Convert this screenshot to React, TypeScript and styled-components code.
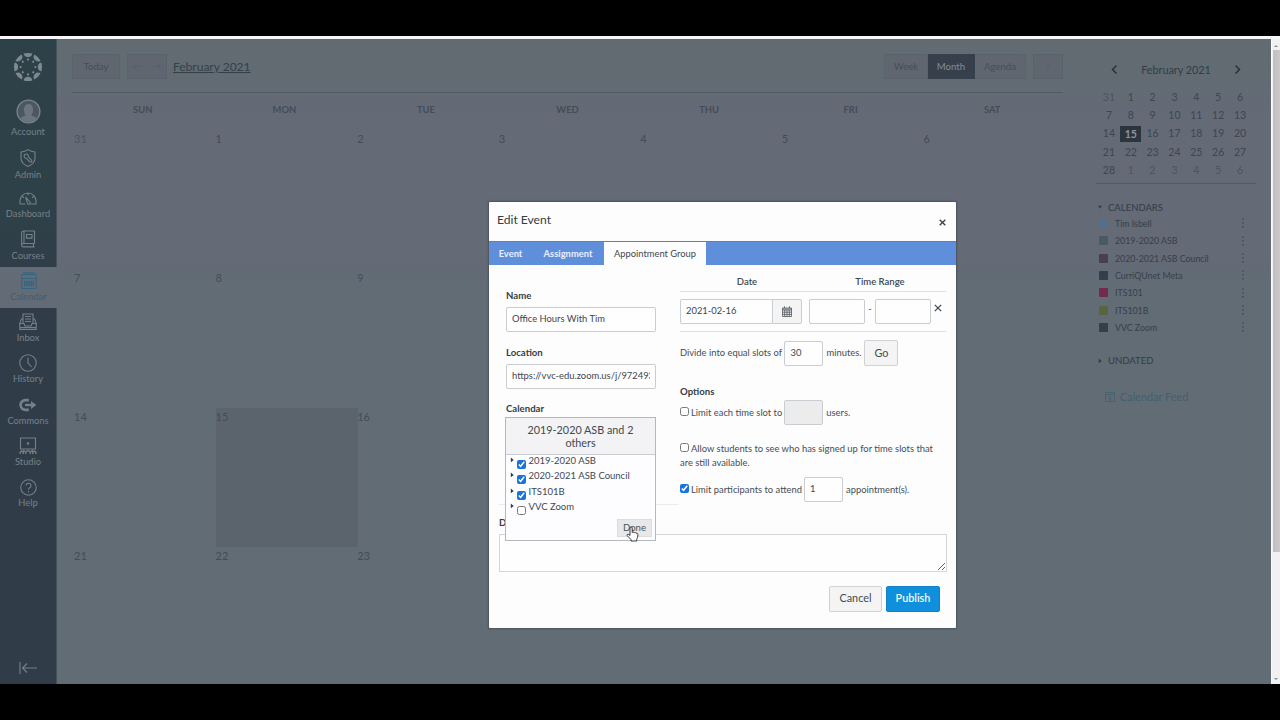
import React from "react";
import styled, { createGlobalStyle } from "styled-components";

const GlobalStyle = createGlobalStyle`
  * { box-sizing: border-box; }
  body {
    margin: 0;
    background: #000;
    font-family: Lato, "Liberation Sans", sans-serif;
    font-size: 9.4px;
    color: #3a444d;
  }
  button, input, textarea { font-family: inherit; margin: 0; }
`;

const Screen = styled.div`
  position: relative;
  width: 1280px;
  height: 720px;
  padding: 36px 0;
  background: #000;
  overflow: hidden;
`;

const Browser = styled.div`
  display: flex;
  height: 648px;
  border-top: 3px solid #f6f6f8;
`;

/* ---------- global navigation ---------- */

const Nav = styled.nav`
  display: flex;
  flex-direction: column;
  width: 57px;
  background: linear-gradient(#2e4048 0, #2e4048 180px, #303d48 240px, #303d49 100%);
  color: #76808a;
  border-right: 1px solid #45525b;
`;

const Logo = styled.div`
  display: flex;
  justify-content: center;
  padding-top: 13px;
  height: 54px;
`;

const NavItem = styled.a<{ $active?: boolean; $tall?: boolean }>`
  display: flex;
  flex-direction: column;
  align-items: center;
  height: ${(p) => (p.$tall ? 50 : 41.3)}px;
  flex: none;
  background: ${(p) => (p.$active ? "#626b76" : "transparent")};
  color: ${(p) => (p.$active ? "#455d6d" : "inherit")};
  margin-right: ${(p) => (p.$active ? -1 : 0)}px;
`;

const NavIcon = styled.span<{ $h: number }>`
  display: flex;
  align-items: center;
  justify-content: center;
  height: ${(p) => p.$h}px;
  margin-top: 2.5px;
  svg { display: block; overflow: visible; }
`;

const NavLabel = styled.span`
  font-size: 9.3px;
  line-height: 10px;
`;

const Collapse = styled.div`
  display: flex;
  justify-content: center;
  margin-top: auto;
  padding-bottom: 7px;
`;

/* ---------- calendar page ---------- */

const Page = styled.div`
  display: flex;
  flex: 1;
  padding-left: 15px;
  background: linear-gradient(#616c71 0, #626b73 40px, #646a76 75px, #646a76 222px, #616c75 240px, #616c75 100%);
`;

const Main = styled.main`
  width: 991px;
`;

const Toolbar = styled.div`
  display: flex;
  align-items: center;
  height: 54px;
  padding-top: 2px;
  border-bottom: 1px solid #525a65;
`;

const ToolButton = styled.button<{ $w: number; $active?: boolean }>`
  display: flex;
  align-items: center;
  justify-content: center;
  width: ${(p) => p.$w}px;
  height: 25px;
  padding: 0 0 1px;
  border: 1px solid ${(p) => (p.$active ? "#35404b" : "#5a626d")};
  background: ${(p) => (p.$active ? "#36404c" : "#60666f")};
  color: ${(p) => (p.$active ? "#858c95" : "#454e58")};
  font-size: 9.6px;
  & + & { border-left-width: 0; }
`;

const ArrowPair = styled(ToolButton)`
  justify-content: space-around;
  margin-left: 7px;
  color: #565e69;
  && { border-left-width: 1px; }
`;

const MonthTitle = styled.h1`
  flex: 1;
  margin: -1px 0 0 6px;
  font-size: 12px;
  font-weight: 400;
  color: #353f4a;
  text-decoration: underline;
`;

const AddButton = styled(ToolButton)`
  margin-left: 7px;
  color: #565e69;
  && { border-left-width: 1px; }
`;

const WeekHeader = styled.div`
  display: grid;
  grid-template-columns: repeat(7, 1fr);
  height: 37px;
  line-height: 34px;
  text-align: center;
  font-size: 9.4px;
  font-weight: 700;
  color: #434c57;
`;

const MonthGrid = styled.div`
  display: grid;
  grid-template-columns: repeat(7, 1fr);
  grid-auto-rows: 139px;
  height: 554px;
  overflow: hidden;
`;

const Day = styled.div<{ $today?: boolean; $muted?: boolean }>`
  margin: ${(p) => (p.$today ? "0 -3px 0 2px" : "0")};
  padding: 2px ${(p) => (p.$today ? 0 : 2)}px;
  font-size: 11px;
  line-height: 14px;
  color: ${(p) => (p.$muted ? "#4b545e" : "#434c57")};
  background: ${(p) => (p.$today ? "#5b646d" : "transparent")};
`;

/* ---------- right rail ---------- */

const Rail = styled.aside`
  width: 160px;
  margin-left: 33px;
  color: #38424c;
`;

const MiniHeader = styled.div`
  display: flex;
  align-items: center;
  justify-content: space-between;
  height: 20px;
  margin: 20px 13px 1px 13px;
  font-size: 10.8px;
  color: #323c47;
`;

const MiniGrid = styled.div`
  display: grid;
  grid-template-columns: repeat(7, 21.85px);
  grid-auto-rows: 18.2px;
  height: 104px;
  padding: 8px 0 0 2px;
  border-bottom: 1px solid #525a65;
`;

const MiniDay = styled.span<{ $today?: boolean; $muted?: boolean }>`
  display: flex;
  align-items: center;
  justify-content: center;
  height: 16px;
  margin: ${(p) => (p.$today ? 1.7 : 1)}px 0.5px;
  font-size: 10.5px;
  font-weight: ${(p) => (p.$today ? 700 : 400)};
  background: ${(p) => (p.$today ? "#2b3540" : "transparent")};
  color: ${(p) => (p.$today ? "#8c939b" : p.$muted ? "#4c555f" : "#3d4751")};
`;

const RailHeading = styled.h2<{ $gap: number }>`
  display: flex;
  align-items: center;
  gap: 6px;
  height: 14px;
  margin: ${(p) => p.$gap}px 0 0.7px 2px;
  font-size: 9.5px;
  font-weight: 400;
  color: #323c47;
`;

const CalendarRow = styled.div`
  display: flex;
  align-items: center;
  height: 17.35px;
  padding: 0 12px 0 3px;
  font-size: 8.8px;
  color: #35404a;
`;

const Swatch = styled.i<{ $color: string }>`
  width: 9px;
  height: 9px;
  margin-right: 7px;
  border-radius: 1px;
  background: ${(p) => p.$color};
`;

const RowName = styled.span`
  flex: 1;
`;

const FeedLink = styled.a`
  display: flex;
  align-items: center;
  gap: 5px;
  margin: 21px 0 0 9px;
  height: 16px;
  font-size: 10.9px;
  color: #43606f;
`;

const Scrollbar = styled.div`
  display: flex;
  flex-direction: column;
  align-items: center;
  width: 9px;
  padding-top: 4px;
  background: #f1f0f2;
  border-left: 1px solid #fbfbfd;
`;

const Thumb = styled.div`
  align-self: flex-end;
  width: 7px;
  height: 502px;
  margin-top: 3px;
  background: linear-gradient(90deg, #bfc0c8, #c9c3c4 60%, #cdc9c5);
`;

const ScrollArrow = styled.i<{ $down?: boolean }>`
  width: 0;
  height: 0;
  border: 2px solid transparent;
  border-${(p) => (p.$down ? "top" : "bottom")}-color: #8a8a8e;
  margin-top: ${(p) => (p.$down ? "auto" : "0")};
  margin-bottom: ${(p) => (p.$down ? "2px" : "0")};
`;

/* ---------- dialog ---------- */

const Dialog = styled.section`
  position: absolute;
  left: 489px;
  top: 202px;
  width: 467px;
  height: 426px;
  background: #fdfdfe;
  border-radius: 1px;
  box-shadow: 0 0 2px 1px #4a535c;
`;

const DialogHeader = styled.header`
  display: flex;
  justify-content: space-between;
  height: 39px;
  padding: 10px 10px 0 8px;
`;

const DialogTitle = styled.h2`
  margin: 0;
  font-size: 12.1px;
  line-height: 16px;
  font-weight: 400;
  color: #333b43;
`;

const CloseButton = styled.button`
  align-self: flex-start;
  padding: 0;
  margin-top: 7px;
  border: 0;
  background: none;
  line-height: 0;
`;

const Tabs = styled.div`
  display: flex;
  height: 24px;
  background: #5f8fdb;
  border-top: 1px solid #5580c6;
`;

const Tab = styled.a<{ $active?: boolean; $w: number }>`
  width: ${(p) => p.$w}px;
  text-align: center;
  line-height: 23px;
  font-size: 9.35px;
  font-weight: ${(p) => (p.$active ? 400 : 700)};
  color: ${(p) => (p.$active ? "#3f4850" : "#e8f0ff")};
  background: ${(p) => (p.$active ? "#fdfdfe" : "transparent")};
`;

const FormBody = styled.div`
  display: flex;
  height: 239px;
  padding: 0 10px 0 17px;
`;

const LeftColumn = styled.div`
  width: 150px;
  margin-right: 24px;
  padding-top: 24px;
`;

const RightColumn = styled.div`
  width: 266px;
  padding-top: 9px;
  color: #454d55;
`;

const Field = styled.label`
  display: block;
  height: 56.5px;
`;

const Label = styled.span`
  display: block;
  height: 18px;
  line-height: 14px;
  font-size: 9.6px;
  font-weight: 700;
  color: #353d45;
`;

const TextInput = styled.input<{ $w: number; $ml?: number }>`
  width: ${(p) => p.$w}px;
  height: 25px;
  flex: none;
  margin-left: ${(p) => p.$ml ?? 0}px;
  padding: 0 5px 2px;
  border: 1px solid #c9ccd0;
  border-radius: 2px;
  background: #fefefe;
  color: #3d454d;
  font-size: 9.4px;
  outline: none;
  &:disabled { background: #ececed; }
`;

const ColumnHeads = styled.div`
  display: grid;
  grid-template-columns: 134px 132px;
  height: 18px;
  line-height: 15px;
  text-align: center;
  font-size: 9.5px;
  font-weight: 600;
  color: #424a52;
  border-bottom: 1px solid #dfe1e3;
`;

const SlotRow = styled.div`
  display: flex;
  align-items: center;
  height: 40px;
  border-bottom: 1px solid #dfe1e3;
`;

const DateButton = styled.button`
  display: flex;
  align-items: center;
  justify-content: center;
  width: 30px;
  height: 25px;
  padding: 0;
  margin: 0 7px 0 -1px;
  border: 1px solid #c9ccd0;
  border-radius: 0 2px 2px 0;
  background: #f4f4f5;
`;

const Dash = styled.span`
  width: 10px;
  text-align: center;
  margin-top: -6px;
`;

const RemoveButton = styled(CloseButton)`
  align-self: center;
  margin: -8px 0 0 3px;
`;

const OptionLine = styled.div<{ $top: number; $h: number }>`
  display: flex;
  align-items: center;
  height: ${(p) => p.$h}px;
  margin-top: ${(p) => p.$top}px;
  white-space: nowrap;
`;

const Caption = styled.span<{ $ml?: number }>`
  margin-left: ${(p) => p.$ml ?? 0}px;
  padding-bottom: 1px;
`;

const OptionText = styled.label<{ $top: number }>`
  display: block;
  max-width: 258px;
  margin-top: ${(p) => p.$top}px;
  line-height: 13.5px;
`;

const Check = styled.input.attrs({ type: "checkbox" })<{ $drop?: number }>`
  width: 9px;
  height: 9px;
  flex: none;
  position: relative;
  left: -0.5px;
  top: ${(p) => p.$drop ?? 0}px;
  margin: 0 2px 0 0;
  accent-color: #1a73dd;
`;

const OptionsTitle = styled.h3`
  margin: 19px 0 0;
  height: 15px;
  line-height: 14px;
  font-size: 9.6px;
  font-weight: 700;
  color: #353d45;
`;

const Button = styled.button<{ $w: number; $primary?: boolean; $ml?: number }>`
  width: ${(p) => p.$w}px;
  height: 26px;
  margin-left: ${(p) => p.$ml ?? 0}px;
  padding: 0 0 2px;
  border: 1px solid ${(p) => (p.$primary ? "#0d82c6" : "#cfd1d4")};
  border-radius: 2px;
  background: ${(p) => (p.$primary ? "#0f8fdc" : "#f4f4f5")};
  color: ${(p) => (p.$primary ? "#f4faff" : "#424a52")};
  font-size: 10.8px;
  font-weight: ${(p) => (p.$primary ? 600 : 400)};
`;

const Details = styled.label`
  display: block;
  width: 447px;
  margin-left: 10px;
  padding-top: 11px;
`;

const DetailsRule = styled.div`
  width: 180px;
  height: 1px;
  margin: 0 0 0 10px;
  background: #e9ebed;
`;

const DetailsArea = styled.textarea`
  display: block;
  width: 448px;
  height: 38px;
  border: 1px solid #d3d5d8;
  background: #fefefe;
  outline: none;
`;

const Footer = styled.footer`
  display: flex;
  justify-content: flex-end;
  padding: 13.500px 16px 0 0;
`;

/* ---------- calendar picker ---------- */

const Picker = styled.div`
  position: absolute;
  left: 505px;
  top: 417px;
  width: 151px;
  height: 124px;
  border: 1px solid #b4b7bb;
  background: #fdfdff;
  color: #414951;
`;

const PickerSummary = styled.div`
  height: 37px;
  padding: 4.5px 12px 0;
  border-bottom: 1px solid #c9ccd0;
  background: #f3f3f5;
  text-align: center;
  font-size: 10.8px;
  line-height: 13.5px;
`;

const PickerRow = styled.label`
  display: flex;
  align-items: flex-start;
  height: 15.3px;
  padding-left: 4px;
  font-size: 9.5px;
  line-height: 11.5px;
  svg { margin: 2px 3.5px 0 0; }
`;

const DoneButton = styled.button`
  display: block;
  width: 35px;
  height: 18px;
  margin: 3px 3px 0 auto;
  padding: 0 0 1px;
  border: 1px solid #dcdcde;
  background: #e8e8e9;
  color: #4b535b;
  font-size: 9.6px;
`;

const Cursor = styled.svg`
  position: absolute;
  left: 626px;
  top: 526px;
`;

/* ---------- icons ---------- */

const Stroke = ({ children, size = 18 }: { children: React.ReactNode; size?: number }) => (
  <svg width={size} height={size} viewBox="0 0 18 18" fill="none" stroke="currentColor" strokeWidth="1.1">
    {children}
  </svg>
);

const CanvasLogo = () => (
  <svg width="30" height="30" viewBox="-15 -15 30 30" fill="#7e888f">
    {[0, 45, 90, 135, 180, 225, 270, 315].map((a) => (
      <g key={a} transform={`rotate(${a})`}>
        <path d="M-4.400 -13.400 A14.100 14.100 0 0 1 4.400 -13.400 A4.500 4.500 0 0 1 -4.400 -13.400Z" />
        <circle cx="0" cy="-7.400" r="1.100" />
      </g>
    ))}
  </svg>
);

const AccountIcon = () => (
  <svg width="25" height="25" viewBox="0 0 25 25">
    <circle cx="12.5" cy="12.5" r="11.4" fill="#4b5762" stroke="#7b858d" strokeWidth="1.3" />
    <path d="M4.5 19.5c1-2 4-2.200 5.200-3.200C7 13.500 7 5 12.500 5s5.500 8.500 2.800 11.300c1.200 1 4.200 1.200 5.200 3.200a11 11 0 0 1-16 0z" fill="#6c757e" />
  </svg>
);

const AdminIcon = () => (
  <Stroke>
    <path d="M9 .6C11 2 13.500 2.800 16 3v6c0 4-3.500 7-7 8.500C5.500 16 2 13 2 9V3c2.500-.2 5-1 7-2.400z" />
    <path d="M5.600 5.600a2.300 2.300 0 0 1 3.800 2.200l3.400 3.600-.3 1.600-1.700-.1-3.300-3.600a2.300 2.300 0 0 1-1.900-3.700z" />
  </Stroke>
);

const DashboardIcon = () => (
  <Stroke>
    <path d="M1 15V12a8 8 0 0 1 16 0v3h-5.500M1 15h5.500M9 4v2.500M3.300 7.500l1.600 1.300M14.700 7.500l-1.600 1.300" />
    <path d="M6.600 8l4.600 5.200a1.500 1.500 0 0 1-2.600 1.400z" />
  </Stroke>
);

const CoursesIcon = () => (
  <Stroke>
    <path d="M15.500 13.500V1H4.500A2 2 0 0 0 2.600 3v12M15.500 13.500H4.400a1.700 1.700 0 0 0 0 3.400h11.100M14.500 13.500v3.400M5 1v12.500" />
    <path d="M7.500 4.500h5.500v3.600H7.500z" />
  </Stroke>
);

const CalendarIcon = () => (
  <svg width="16" height="18" viewBox="0 0 16 18" fill="none" stroke="#35647f" strokeWidth="1">
    <path d="M.8 2.500h14.400v14H.8zM.8 6.500h14.400M2 .9h12M3.500 8.500v6M5.700 8.500v6M8 8.500v6M10.300 8.500v6M12.500 8.500v6M3 10.500h10M3 12.700h10" />
  </svg>
);

const InboxIcon = () => (
  <Stroke>
    <path d="M4 10V1h10v9M4 6H2.500L.8 10v6.500h16.400V10L15.500 6H14M.8 10.500h4.200l1 2.500h6l1-2.500h4.200M6 3.500h6M6 6h6M6 8.500h6M1 14.600h16" />
  </Stroke>
);

const HistoryIcon = () => (
  <Stroke>
    <circle cx="9" cy="9" r="8.200" />
    <path d="M9 3.500V9l3.600 4" />
  </Stroke>
);

const CommonsIcon = () => (
  <Stroke>
    <path d="M9.800 4H6.500a4.800 4.800 0 1 0 0 9.800h3.300" strokeWidth="2.600" transform="translate(0 .1)" />
    <path d="M6 9h7" strokeWidth="2.400" />
    <path d="M12 5l5.300 4-5.300 4z" fill="currentColor" stroke="none" />
  </Stroke>
);

const StudioIcon = () => (
  <Stroke>
    <path d="M1.500 1h15v11h-15z" />
    <circle cx="9" cy="6.500" r=".7" fill="currentColor" />
    <path d="M1.200 17v-2l1.300-1 1.700 1v2M6.800 17v-2.200l2.200-1.300 2.200 1.300V17M13.800 17v-2l1.300-1 1.700 1v2M4 13.500l2 1M14 13.500l-2 1" strokeWidth="1.400" />
  </Stroke>
);

const HelpIcon = () => (
  <Stroke size={17}>
    <circle cx="9" cy="9" r="8.200" />
    <path d="M6.400 7a2.600 2.600 0 1 1 3.900 2.300c-.9.500-1.300 1-1.300 2.200M9 12.800v1.400" />
  </Stroke>
);

const Cross = ({ size, width }: { size: number; width: number }) => (
  <svg width={size} height={size} viewBox="0 0 8 8" stroke="#3c444c" strokeWidth={width}>
    <path d="M.8.8l6.400 6.400M7.200.8L.8 7.200" />
  </svg>
);

const DateIcon = () => (
  <svg width="10" height="11" viewBox="0 0 10 11" fill="none" stroke="#50575e" strokeWidth=".8">
    <path d="M.5 2h9v8.500h-9zM.5 4h9M.5 6.200h9M.5 8.400h9M2.700 4v6.500M5 4v6.500M7.300 4v6.500M.5 3h9M2.500.3v1.700M7.500.3v1.700" />
  </svg>
);

const Chevron = ({ flip }: { flip?: boolean }) => (
  <svg width="11" height="11" viewBox="0 0 11 11" fill="none" stroke="#27313c" strokeWidth="1.5">
    <path d={flip ? "M3.500 1.500l4 4-4 4" : "M7.500 1.500l-4 4 4 4"} />
  </svg>
);

const Dots = () => (
  <svg width="2" height="10" viewBox="0 0 2 10" fill="#37414b">
    <path d="M.3 .5h1.300v1.300H.3zM.3 4.300h1.300v1.300H.3zM.3 8.100h1.300v1.300H.3z" />
  </svg>
);

const Caret = ({ right }: { right?: boolean }) => (
  <svg width="4" height="6" viewBox="0 0 4 6" fill="#323c47">
    <path d={right ? "M.8 .5l2.900 2.400L.8 5.300z" : "M0 1.800h4L2 4.500z"} />
  </svg>
);

/* ---------- data ---------- */

const navItems: { label: string; icon: React.ReactNode; iconHeight?: number }[] = [
  { label: "Admin", icon: <AdminIcon />, iconHeight: 24 },
  { label: "Dashboard", icon: <DashboardIcon /> },
  { label: "Courses", icon: <CoursesIcon /> },
  { label: "Calendar", icon: <CalendarIcon /> },
  { label: "Inbox", icon: <InboxIcon /> },
  { label: "History", icon: <HistoryIcon /> },
  { label: "Commons", icon: <CommonsIcon /> },
  { label: "Studio", icon: <StudioIcon /> },
  { label: "Help", icon: <HelpIcon /> },
];

const weekDays = ["SUN", "MON", "TUE", "WED", "THU", "FRI", "SAT"];
const monthDays = [31, ...Array.from({ length: 27 }, (_, i) => i + 1)];
const miniDays = [31, ...Array.from({ length: 28 }, (_, i) => i + 1), 1, 2, 3, 4, 5, 6];

const calendars = [
  { name: "Tim Isbell", color: "#52708c" },
  { name: "2019-2020 ASB", color: "#495a63" },
  { name: "2020-2021 ASB Council", color: "#483f51" },
  { name: "CurriQUnet Meta", color: "#343e4b" },
  { name: "ITS101", color: "#762950" },
  { name: "ITS101B", color: "#59653f" },
  { name: "VVC Zoom", color: "#343f4a" },
];

const choices = [
  { name: "2019-2020 ASB", on: true },
  { name: "2020-2021 ASB Council", on: true },
  { name: "ITS101B", on: true },
  { name: "VVC Zoom", on: false },
];

export default function App() {
  return (
    <Screen>
      <GlobalStyle />
      <Browser>
        <Nav>
          <Logo><CanvasLogo /></Logo>
          <NavItem $tall>
            <NavIcon $h={31.5}><AccountIcon /></NavIcon>
            <NavLabel>Account</NavLabel>
          </NavItem>
          {navItems.map((n) => (
            <NavItem key={n.label} $active={n.label === "Calendar"}>
              <NavIcon $h={n.iconHeight ?? 22.5}>{n.icon}</NavIcon>
              <NavLabel>{n.label}</NavLabel>
            </NavItem>
          ))}
          <Collapse>
            <Stroke><path d="M1 3v12M3.500 9H18M8 4.500L3.500 9 8 13.500" /></Stroke>
          </Collapse>
        </Nav>

        <Page>
          <Main>
            <Toolbar>
              <ToolButton $w={48}>Today</ToolButton>
              <ArrowPair $w={40}><span>←</span><span>→</span></ArrowPair>
              <MonthTitle>February 2021</MonthTitle>
              <ToolButton $w={44}>Week</ToolButton>
              <ToolButton $w={47} $active>Month</ToolButton>
              <ToolButton $w={51}>Agenda</ToolButton>
              <AddButton $w={30}>+</AddButton>
            </Toolbar>
            <WeekHeader>
              {weekDays.map((d) => <span key={d}>{d}</span>)}
            </WeekHeader>
            <MonthGrid>
              {monthDays.map((d, i) => (
                <Day key={i} $today={d === 15} $muted={i === 0}>
                  {i < 7 || i % 7 < 3 ? d : null}
                </Day>
              ))}
            </MonthGrid>
          </Main>

          <Rail>
            <MiniHeader><Chevron />February 2021<Chevron flip /></MiniHeader>
            <MiniGrid>
              {miniDays.map((d, i) => (
                <MiniDay key={i} $today={i === 15} $muted={i === 0 || i > 28}>{d}</MiniDay>
              ))}
            </MiniGrid>
            <RailHeading $gap={16}><Caret />CALENDARS</RailHeading>
            {calendars.map((c) => (
              <CalendarRow key={c.name}>
                <Swatch $color={c.color} />
                <RowName>{c.name}</RowName>
                <Dots />
              </CalendarRow>
            ))}
            <RailHeading $gap={17.5}><Caret right />UNDATED</RailHeading>
            <FeedLink>
              <svg width="10" height="11" viewBox="0 0 10 11" fill="none" stroke="currentColor">
                <path d="M.5 1.500h9v9h-9zM.5 3.500h9M3.800 5.800l1.200-.7v3.700M3.800 8.800h2.600" strokeWidth=".8" />
              </svg>
              Calendar Feed
            </FeedLink>
          </Rail>
        </Page>

        <Scrollbar>
          <ScrollArrow />
          <Thumb />
          <ScrollArrow $down />
        </Scrollbar>
      </Browser>

      <Dialog>
        <DialogHeader>
          <DialogTitle>Edit Event</DialogTitle>
          <CloseButton><Cross size={7} width={1.6} /></CloseButton>
        </DialogHeader>
        <Tabs>
          <Tab $w={43}>Event</Tab>
          <Tab $w={72}>Assignment</Tab>
          <Tab $w={102} $active>Appointment Group</Tab>
        </Tabs>
        <FormBody>
          <LeftColumn>
            <Field>
              <Label>Name</Label>
              <TextInput $w={150} defaultValue="Office Hours With Tim" />
            </Field>
            <Field>
              <Label>Location</Label>
              <TextInput $w={150} defaultValue="https://vvc-edu.zoom.us/j/97249310" />
            </Field>
            <Label>Calendar</Label>
          </LeftColumn>
          <RightColumn>
            <ColumnHeads><span>Date</span><span>Time Range</span></ColumnHeads>
            <SlotRow>
              <TextInput $w={93} defaultValue="2021-02-16" />
              <DateButton><DateIcon /></DateButton>
              <TextInput $w={56} />
              <Dash>-</Dash>
              <TextInput $w={56} />
              <RemoveButton><Cross size={8} width={1.2} /></RemoveButton>
            </SlotRow>
            <OptionLine $top={8} $h={26}>
              <Caption>Divide into equal slots of</Caption>
              <TextInput $w={39} $ml={2.5} defaultValue="30" />
              <Caption $ml={3}>minutes.</Caption>
              <Button $w={34} $ml={3}>Go</Button>
            </OptionLine>
            <OptionsTitle>Options</OptionsTitle>
            <OptionLine $top={0} $h={25}>
              <Check $drop={-1.5} />
              <Caption>Limit each time slot to</Caption>
              <TextInput $w={39} $ml={2} disabled />
              <Caption $ml={3}>users.</Caption>
            </OptionLine>
            <OptionText $top={17}>
              <Check $drop={0} />
              Allow students to see who has signed up for time slots that are still available.
            </OptionText>
            <OptionLine $top={8} $h={25}>
              <Check $drop={-1.5} defaultChecked />
              <Caption>Limit participants to attend</Caption>
              <TextInput $w={39} $ml={2} defaultValue="1" />
              <Caption $ml={3}>appointment(s).</Caption>
            </OptionLine>
          </RightColumn>
        </FormBody>
        <DetailsRule />
        <Details>
          <Label>Details:</Label>
          <DetailsArea />
        </Details>
        <Footer>
          <Button $w={53}>Cancel</Button>
          <Button $w={54} $ml={4} $primary>Publish</Button>
        </Footer>
      </Dialog>

      <Picker>
        <PickerSummary>2019-2020 ASB and 2 others</PickerSummary>
        {choices.map((c) => (
          <PickerRow key={c.name}>
            <Caret right />
            <Check $drop={5} defaultChecked={c.on} />
            {c.name}
          </PickerRow>
        ))}
        <DoneButton>Done</DoneButton>
      </Picker>

      <Cursor width="13" height="16" viewBox="0 0 13 16" fill="#fff" stroke="#222" strokeWidth=".9">
        <path d="M4 9.500V2a1.100 1.100 0 0 1 2.200 0v4.500c.6-.7 1.800-.5 2 .3.700-.5 1.700-.2 1.900.5.800-.4 1.800.1 1.800 1.100 0 2.500-.6 3.600-1.200 5V15H5v-1.500L1.200 9.700c-.7-1 .6-1.900 1.500-1.200z" />
      </Cursor>
    </Screen>
  );
}
